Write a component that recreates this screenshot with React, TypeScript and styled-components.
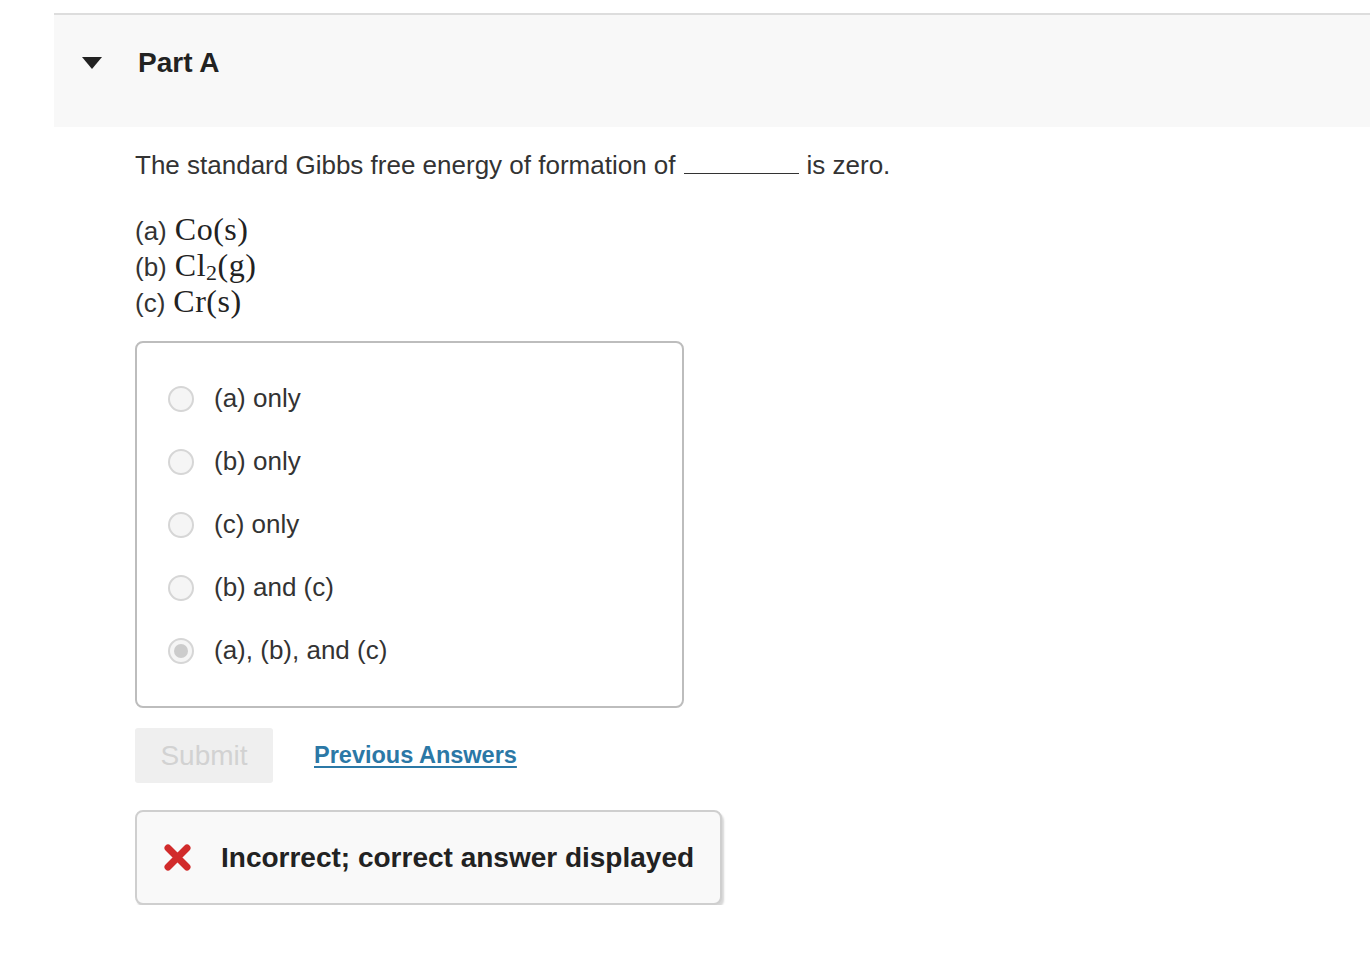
import React from "react";
import styled, { createGlobalStyle } from "styled-components";

const Global = createGlobalStyle`
  html, body { margin: 0; padding: 0; background: #fff; }
  body { font-family: "Liberation Sans", Arial, sans-serif; color: #333; }
`;

const Page = styled.div`
  padding-top: 13px;
  width: 1370px;
`;

const PartHeader = styled.div`
  margin-left: 54px;
  border-top: 2px solid #dddddd;
  background: #f8f8f8;
  height: 114px;
  display: flex;
  align-items: flex-start;
  padding: 32px 0 0 28px;
  box-sizing: border-box;
  gap: 36px;
`;

const Caret = styled.span`
  width: 0;
  height: 0;
  margin-top: 10px;
  border-left: 10.5px solid transparent;
  border-right: 10.5px solid transparent;
  border-top: 12px solid #222;
`;

const PartTitle = styled.h2`
  margin: 0;
  font-size: 28px;
  line-height: 32px;
  font-weight: 700;
  color: #222;
`;

const Content = styled.div`
  padding-left: 135px;
  padding-top: 23px;
`;

const Question = styled.p`
  margin: 0;
  font-size: 26px;
  line-height: 30px;
  color: #333;
`;

const Blank = styled.span`
  display: inline-block;
  width: 115px;
  border-bottom: 1.5px solid #333;
  margin: 0 8px 0 8px;
  vertical-align: baseline;
  height: 1px;
`;

const ChoiceList = styled.div`
  margin-top: 31px;
  display: flex;
  flex-direction: column;
`;

const ChoiceLine = styled.div`
  font-size: 26px;
  line-height: 36px;
  height: 36px;
  color: #333;
`;

const Formula = styled.span`
  font-family: "Liberation Serif", "Times New Roman", serif;
  font-size: 32px;
  letter-spacing: 0.5px;
  color: #222;
  margin-left: 8px;
`;

const Sub = styled.sub`
  font-size: 22px;
  vertical-align: -4px;
  line-height: 0;
`;

const OptionsBox = styled.div`
  margin-top: 22px;
  width: 549px;
  box-sizing: border-box;
  border: 2px solid #bdbdbd;
  border-radius: 8px;
  padding: 24px 0 24px 31px;
  display: flex;
  flex-direction: column;
`;

const OptionRow = styled.label`
  height: 63px;
  display: flex;
  align-items: center;
  gap: 20px;
  font-size: 26px;
  color: #333;
`;

const Radio = styled.span<{ $checked?: boolean }>`
  width: 26px;
  height: 26px;
  box-sizing: border-box;
  border-radius: 50%;
  border: 2px solid #d6d6d6;
  background: #f5f5f5;
  display: flex;
  align-items: center;
  justify-content: center;
  &::after {
    content: "";
    display: ${(p) => (p.$checked ? "block" : "none")};
    width: 14px;
    height: 14px;
    border-radius: 50%;
    background: #cccccc;
  }
`;

const Actions = styled.div`
  margin-top: 20px;
  display: flex;
  align-items: center;
  gap: 41px;
`;

const SubmitButton = styled.button`
  width: 138px;
  height: 55px;
  border: none;
  border-radius: 3px;
  background: #efefef;
  color: #d2d2d2;
  font-family: "Liberation Sans", Arial, sans-serif;
  font-size: 28px;
  padding: 0;
  cursor: default;
`;

const PrevLink = styled.a`
  font-size: 23.5px;
  font-weight: 700;
  color: #2b78a6;
  text-decoration: underline;
  text-underline-offset: 3px;
  text-decoration-thickness: 2px;
  cursor: pointer;
`;

const Feedback = styled.div`
  margin-top: 27px;
  width: 587px;
  height: 95px;
  box-sizing: border-box;
  border: 2px solid #cfcfcf;
  border-radius: 8px;
  background: #f9f9f9;
  box-shadow: 2px 3px 2px rgba(0, 0, 0, 0.16);
  display: flex;
  align-items: center;
  padding-left: 27px;
  gap: 30px;
`;

const FeedbackText = styled.span`
  font-size: 28px;
  font-weight: 700;
  color: #222;
`;

const CrossIcon = () => (
  <svg width="27" height="27" viewBox="0 0 27 27">
    <path
      d="M4 4 L23 23 M23 4 L4 23"
      stroke="#d12b2b"
      strokeWidth="7"
      strokeLinecap="round"
    />
  </svg>
);

const options = ["(a) only", "(b) only", "(c) only", "(b) and (c)", "(a), (b), and (c)"];

export default function App() {
  return (
    <>
      <Global />
      <Page>
        <PartHeader>
          <Caret />
          <PartTitle>Part A</PartTitle>
        </PartHeader>
        <Content>
          <Question>
            The standard Gibbs free energy of formation of
            <Blank />
            is zero.
          </Question>
          <ChoiceList>
            <ChoiceLine>
              (a)<Formula>Co(s)</Formula>
            </ChoiceLine>
            <ChoiceLine>
              (b)
              <Formula>
                Cl<Sub>2</Sub>(g)
              </Formula>
            </ChoiceLine>
            <ChoiceLine>
              (c)<Formula>Cr(s)</Formula>
            </ChoiceLine>
          </ChoiceList>
          <OptionsBox>
            {options.map((o, i) => (
              <OptionRow key={o}>
                <Radio $checked={i === options.length - 1} />
                {o}
              </OptionRow>
            ))}
          </OptionsBox>
          <Actions>
            <SubmitButton disabled>Submit</SubmitButton>
            <PrevLink>Previous Answers</PrevLink>
          </Actions>
          <Feedback>
            <CrossIcon />
            <FeedbackText>Incorrect; correct answer displayed</FeedbackText>
          </Feedback>
        </Content>
      </Page>
    </>
  );
}
